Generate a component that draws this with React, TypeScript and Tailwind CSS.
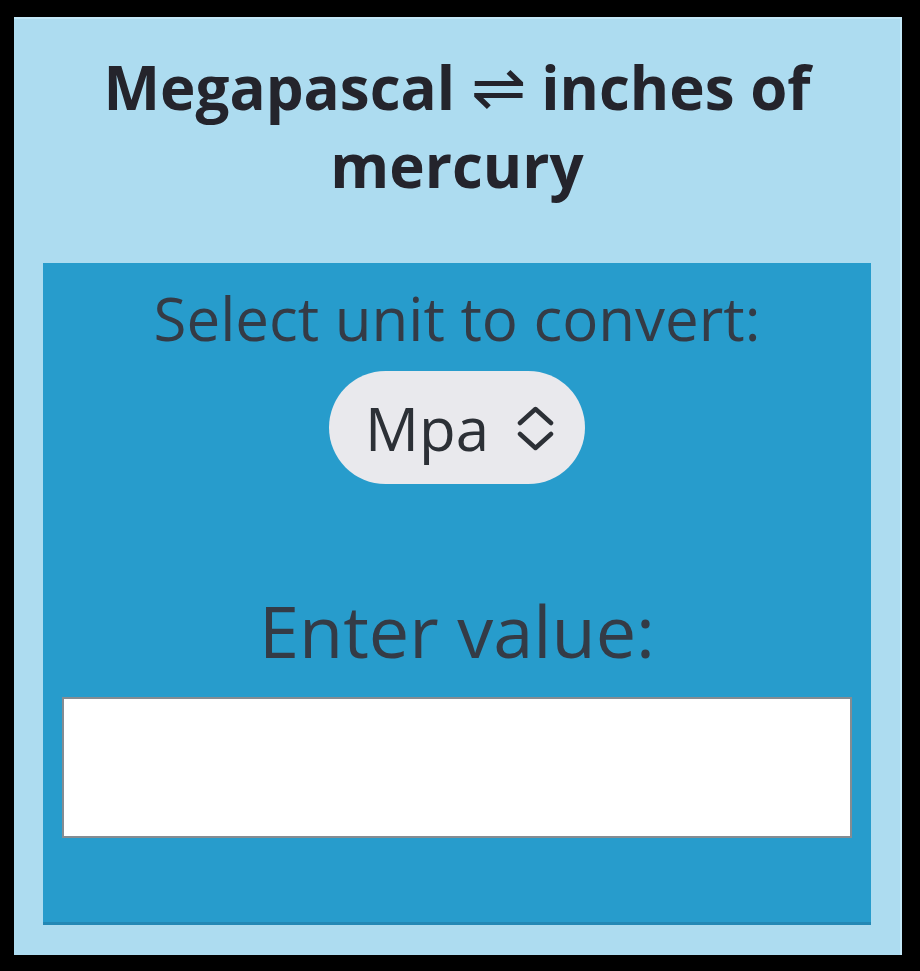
export default function App() {
  return (
    <div className="w-[920px] h-[971px] bg-black pt-[17px] pl-[14px] font-['Open_Sans',sans-serif]">
      <div className="w-[888px] h-[938px] bg-[#addcf0] border-t-2 border-r-2 border-[#c2e7f7] flex flex-col items-center">
        <h1 className="mt-[29px] w-[820px] text-center text-[60px] leading-[78px] font-bold text-[#24242c]">
          Megapascal <span className="text-[66px] leading-none font-extralight font-['DejaVu_Sans',sans-serif]">⇌</span> inches of mercury
        </h1>

        <div className="mt-[59px] w-[828px] h-[662px] bg-[#279ccc] border-b-[3px] border-[#2388b5] flex flex-col items-center pt-[14px]">
          <label className="text-[60px] leading-[82px] text-[#343b46]">Select unit to convert:</label>
          <button className="mt-[12px] h-[113px] rounded-full bg-[#e9e9ed] pl-[36px] pr-[31px] flex items-center gap-[28px] text-[#2c3036]">
            <span className="text-[60px] leading-none">Mpa</span>
            <svg width="37" height="46" viewBox="0 0 37 46" fill="none" stroke="#2c3036" strokeWidth="4.5" strokeLinecap="round" strokeLinejoin="round">
              <path d="M3 18 L18.5 4 L34 18" />
              <path d="M3 29 L18.5 43 L34 29" />
            </svg>
          </button>

          <label className="mt-[97px] text-[72px] leading-[98px] text-[#343b46]">Enter value:</label>
          <input type="text" className="mt-[18px] w-[790px] h-[141px] bg-white border-2 border-[#858c92] outline-none" />
        </div>
      </div>
    </div>
  )
}
